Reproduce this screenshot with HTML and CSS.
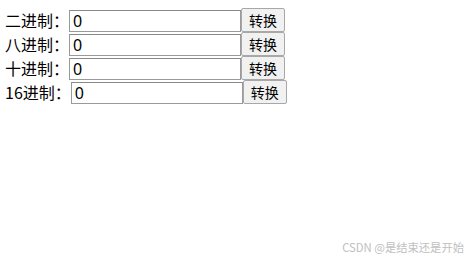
FILE: index.html
```html
<!DOCTYPE html>
<html>
<head>
<meta charset="utf-8">
<link rel="stylesheet" href="styles.css">
</head>
<body>
<div class="form">
  <div class="row"><span class="label">二进制：</span><input class="field" type="text" value="0"><button class="btn">转换</button></div>
  <div class="row"><span class="label">八进制：</span><input class="field" type="text" value="0"><button class="btn">转换</button></div>
  <div class="row"><span class="label">十进制：</span><input class="field" type="text" value="0"><button class="btn">转换</button></div>
  <div class="row"><span class="label">16进制：</span><input class="field" type="text" value="0"><button class="btn">转换</button></div>
</div>
<div class="watermark">CSDN @是结束还是开始</div>
</body>
</html>
```
FILE: styles.css
```css
html, body {
  margin: 0;
  padding: 0;
  height: 100%;
}
body {
  padding: 8px 4px 0 5px;
  box-sizing: border-box;
  font-family: "Noto Sans CJK SC", "Noto Sans", sans-serif;
  color: #000;
  background: #fff;
  position: relative;
}
.form {
  display: flex;
  flex-direction: column;
}
.row {
  display: flex;
  align-items: center;
  height: 24px;
}
.label {
  font-size: 16px;
  line-height: 24px;
}
.field {
  box-sizing: border-box;
  width: 172px;
  height: 22px;
  margin: 1px 0 0 0;
  padding: 0 3px;
  border: 1px solid #9a9a9a;
  border-top-color: #8a8a8a;
  font-family: "Noto Sans", "Liberation Sans", sans-serif;
  font-size: 16px;
  color: #000;
  background: #fff;
  outline: none;
}
.btn {
  box-sizing: border-box;
  width: 44px;
  height: 24px;
  margin: 0;
  padding: 0;
  border: 1px solid #a8a8a8;
  border-radius: 2px;
  background: #f1f1f1;
  font-family: "Noto Sans CJK SC", sans-serif;
  font-size: 14px;
  color: #000;
}
.watermark {
  position: absolute;
  right: 10px;
  bottom: 4px;
  font-family: "Noto Sans CJK SC", "Noto Sans", sans-serif;
  font-size: 11.3px;
  color: #c0c0c0;
}
```
